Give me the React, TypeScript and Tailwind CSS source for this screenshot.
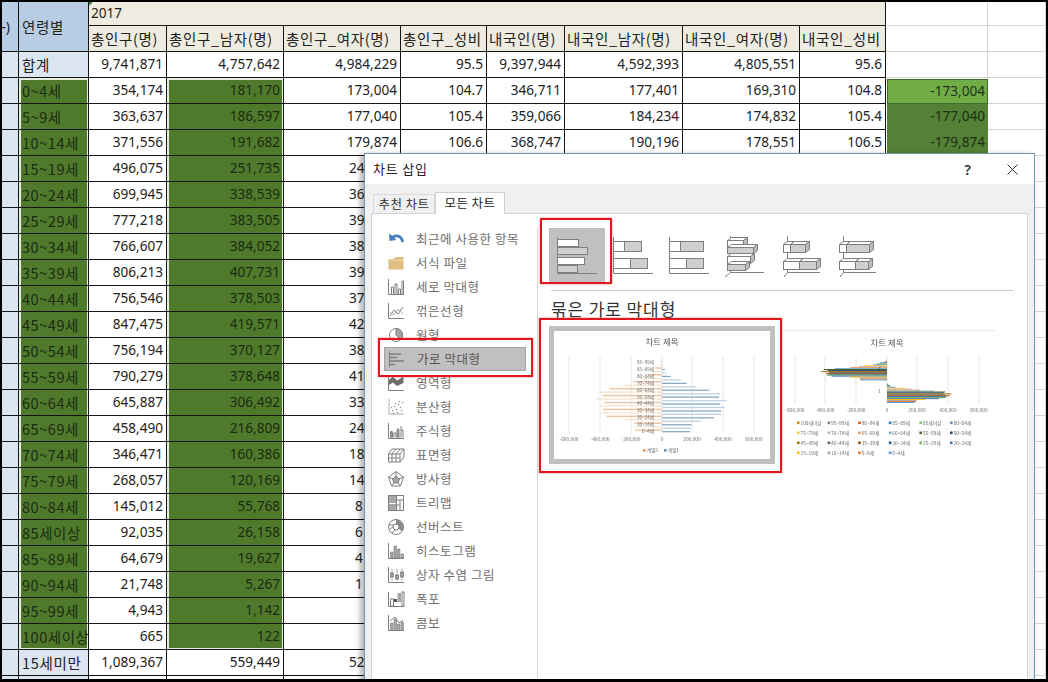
import React from "react";

const NUM = { fontFamily: '"Noto Sans","Noto Sans CJK KR",sans-serif' };
const KR = { fontFamily: '"Noto Sans CJK KR","Noto Sans",sans-serif' };

const ages: [string, number, number][] = [
  ["0~4세", 354174, 181170], ["5~9세", 363637, 186597], ["10~14세", 371556, 191682], ["15~19세", 496075, 251735],
  ["20~24세", 699945, 338539], ["25~29세", 777218, 383505], ["30~34세", 766607, 384052], ["35~39세", 806213, 407731],
  ["40~44세", 756546, 378503], ["45~49세", 847475, 419571], ["50~54세", 756194, 370127], ["55~59세", 790279, 378648],
  ["60~64세", 645887, 306492], ["65~69세", 458490, 216809], ["70~74세", 346471, 160386], ["75~79세", 268057, 120169],
  ["80~84세", 145012, 55768], ["85세이상", 92035, 26158], ["85~89세", 64679, 19627], ["90~94세", 21748, 5267],
  ["95~99세", 4943, 1142], ["100세이상", 665, 122],
];
const fmt = (n: number) => n.toLocaleString("en-US");

const heads = ["총인구(명)", "총인구_남자(명)", "총인구_여자(명)", "총인구_성비", "내국인(명)", "내국인_남자(명)", "내국인_여자(명)", "내국인_성비"];
const extra: string[][] = [
  ["104.7", "346,711", "177,401", "169,310", "104.8"],
  ["105.4", "359,066", "184,234", "174,832", "105.4"],
  ["106.6", "368,747", "190,196", "178,551", "106.5"],
];

const line = "border-r border-b border-[#141414]";
const grid = "border-r border-b border-[#d4d4d4]";
const numCls = `${line} flex items-center justify-end pr-[3px] text-[13.6px] text-[#222] whitespace-nowrap overflow-hidden`;
const cutCls = `${line} flex items-center text-[13.6px] text-[#222] whitespace-nowrap overflow-hidden`;

function CutCell({ value }: { value: number }) {
  if (value >= 100000) return <div className={`${cutCls} pl-[65px]`}>{String(value).slice(0, 2)}</div>;
  if (value >= 10000) return <div className={`${cutCls} pl-[71px]`}>{String(value).slice(0, 1)}</div>;
  return <div className={cutCls} />;
}

function Sheet() {
  return (
    <div className="grid grid-cols-[17px_70px_78px_117px_117px_86px_78px_118px_117px_86px_102px_1fr] grid-rows-[24px_26px] auto-rows-[26px]" style={NUM}>
      <div className={`${line} row-span-2 bg-[#b8cce4] flex items-center justify-end pr-[8px] text-[14px] text-[#222] overflow-hidden`}>-)</div>
      <div className={`${line} row-span-2 bg-[#b8cce4] flex items-center pl-[3px] text-[14.5px] tracking-[0.7px] text-[#222]`} style={KR}>연령별</div>
      <div className={`${line} col-span-8 bg-[#eeece1] flex items-center pl-[2px] text-[13.6px] text-[#222] relative`}>
        2017
        <span className="absolute left-0 top-0 w-0 h-0 border-t-[4px] border-r-[4px] border-t-[#2f8a3a] border-r-transparent" />
      </div>
      <div className={grid} />
      <div className={grid} />
      {heads.map((h) => (
        <div key={h} className={`${line} bg-[#eeece1] flex items-center pl-[2px] text-[14.5px] tracking-[0.65px] text-[#222] whitespace-nowrap overflow-hidden`} style={KR}>{h}</div>
      ))}
      <div className={grid} />
      <div className={grid} />

      <div className={`${line} bg-[#dce6f1]`} />
      <div className={`${line} bg-[#dce6f1] flex items-center pl-[3px] text-[14.5px] tracking-[0.7px] text-[#222]`} style={KR}>합계</div>
      {["9,741,871", "4,757,642", "4,984,229", "95.5", "9,397,944", "4,592,393", "4,805,551", "95.6"].map((v, i) => (
        <div key={i} className={numCls}>{v}</div>
      ))}
      <div className={grid} />
      <div className={grid} />

      {ages.map(([name, total, male], i) => {
        const first = i === 0;
        const last = i === ages.length - 1;
        const edge = first
          ? "shadow-[inset_2px_2px_0_#e6ede1,inset_-1px_0_0_#e6ede1]"
          : last
          ? "shadow-[inset_2px_-1px_0_#e6ede1,inset_-1px_-1px_0_#e6ede1]"
          : "shadow-[inset_2px_0_0_#e6ede1,inset_-1px_0_0_#e6ede1]";
        const ex = extra[i];
        return (
          <React.Fragment key={name}>
            <div className={`${line} bg-[#dce6f1]`} />
            <div className={`${line} ${edge} bg-[#4f7a2c] flex items-center pl-[3px] text-[14.5px] tracking-[0.55px] text-[#1c2a12] whitespace-nowrap overflow-hidden`} style={KR}>{name}</div>
            <div className={numCls}>{fmt(total)}</div>
            <div className={`${numCls} ${edge} bg-[#4f7a2c] !text-[#1c2a12]`}>{fmt(male)}</div>
            {i < 3 ? <div className={numCls}>{fmt(total - male)}</div> : <CutCell value={total - male} />}
            {[0, 1, 2, 3, 4].map((k) => (
              <div key={k} className={numCls}>{ex ? ex[k] : ""}</div>
            ))}
            {first ? (
              <div className="bg-[#70ad47] border border-[#3c6b2a] flex items-center justify-end pr-[2px] text-[13.6px] text-[#243318] ml-[1px] mt-px">-{fmt(total - male)}</div>
            ) : (
              <div className="bg-[#538135] flex items-center justify-end pr-[3px] pb-[2px] text-[13.6px] text-[#1f2d14] ml-[1px]">{i < 3 ? `-${fmt(total - male)}` : ""}</div>
            )}
            <div className={grid} />
          </React.Fragment>
        );
      })}

      <div className={`${line} bg-[#dce6f1]`} />
      <div className={`${line} bg-[#dce6f1] flex items-center pl-[3px] text-[14.5px] tracking-[0.7px] text-[#222]`} style={KR}>15세미만</div>
      <div className={numCls}>1,089,367</div>
      <div className={numCls}>559,449</div>
      <CutCell value={529918} />
      {[0, 1, 2, 3, 4].map((k) => <div key={k} className={numCls} />)}
      <div className={grid} />
      <div className={grid} />

      <div className={`${line} bg-[#dce6f1]`} />
      <div className={`${line} bg-[#dce6f1]`} />
      {[0, 1, 2, 3, 4, 5, 6, 7].map((k) => <div key={k} className={line} />)}
      <div className={grid} />
      <div className={grid} />
    </div>
  );
}

const G = "#7f7f7f";
const F = "#a6a6a6";
const listIcons: React.ReactNode[] = [
  <path d="M2 3.5 L2.5 11 L9.5 10 L7.2 7.8 C10 6.4 13.5 7.6 14.6 12.5 L17 12 C16.4 5.4 10.6 2.4 5.2 5.8 Z" fill="#4a7ebb" />,
  <g><path d="M1.5 5 H7 L8.5 3 H16.5 V15.5 H1.5 Z" fill="#e0bd80" /><path d="M1.5 5.5 H16.5 V7 H1.5 Z" fill="#e9cf9f" /></g>,
  <g fill="none" stroke={G}><path d="M1.5 1 V16.5 H17" /><path d="M4.5 16 V9 H6.5 V16 M8 16 V6 H10 V16 M11.5 16 V11 H13.5 V16 M15 16 V3 H16.5 V16" /></g>,
  <g fill="none" stroke={G}><path d="M1.5 1 V16.5 H17" /><path d="M3 14 L7 8 L11 12 L16 5" /><path d="M3 10 L7 13 L11 7 L16 12" stroke="#b0b0b0" /></g>,
  <g><circle cx="9" cy="9" r="6.5" fill="#fff" stroke={G} /><path d="M9 9 V2.5 A6.5 6.5 0 0 1 13.6 13.6 Z" fill={F} stroke={G} /></g>,
  <g fill="none" stroke={G}><path d="M1.5 1 V17" /><path d="M1.5 4 H13 M1.5 7.5 H9 M1.5 11 H16 M1.5 14.5 H7" strokeWidth="1.6" /></g>,
  <g><path d="M1.5 1 V16.5 H17" fill="none" stroke={G} /><path d="M2 6 L6 2.5 L10 6.5 L16.5 2.5 V9 L10 12 L6 8.5 L2 11 Z" fill="#6e6e6e" /></g>,
  <g fill={F}><path d="M1.5 1 V16.5 H17 V15.5 H2.5 V1 Z" fill="#b0b0b0" />{[[5,12],[7,8],[9,11],[11,6],[13,9],[15,4],[6,15],[10,14],[14,12],[8,5],[12,3],[4,9]].map(([x,y],i)=><rect key={i} x={x} y={y} width="1.2" height="1.2" fill="#8a8a8a"/>)}</g>,
  <g fill="none" stroke={G}><path d="M1.5 1 V16.5 H17" /><path d="M4.5 15.5 V9 M7 15.5 V11 H9 V15.5 M11 15.5 V6 M14 15.5 V8 H16 V15.5 M14 4 V8" /><rect x="3.5" y="10" width="2" height="5" fill={F} /><rect x="10" y="8" width="2" height="7" fill={F} /></g>,
  <g fill="none" stroke={G}><path d="M5 3 H17 V11 L13 16 H1.5 V8 Z" /><path d="M1.5 8 H13 V16 M13 8 L17 3 M5 8 V16 M9 8 V16 M1.5 12 H13" /><path d="M5 8 L9 3 M9 8 L13 3" /></g>,
  <g fill="none" stroke={G}><path d="M9 1.5 L16.5 7 L13.5 16 H4.5 L1.5 7 Z" /><path d="M9 1.5 V10 M16.5 7 L9 10 M13.5 16 L9 10 M4.5 16 L9 10 M1.5 7 L9 10" /><path d="M9 6 L12.5 9 L11 13 H7 L5.5 9 Z" fill={F} /></g>,
  <g><rect x="1.5" y="1.5" width="15" height="15" fill="#fff" stroke={G} /><rect x="2" y="2" width="7" height="7" fill={F} /><rect x="2" y="10" width="7" height="6" fill={F} /><path d="M9.5 1.5 V16.5 M9.5 6 H16.5 M13 6 V16.5 M9.5 11 H13" stroke={G} fill="none" /></g>,
  <g><circle cx="9" cy="9" r="7.5" fill="#fff" stroke={G} /><path d="M9 1.5 A7.5 7.5 0 0 1 15 13.5 L11 10 A3 3 0 0 0 9 6 Z" fill="#8c8c8c" /><path d="M3 11 L6 9 M5 15 L8 12 M2 7 H6" stroke={G} fill="none" /><circle cx="9" cy="9" r="3" fill="#fff" stroke={G} /></g>,
  <g><path d="M1.5 1 V16.5 H17" fill="none" stroke={G} /><path d="M3.5 16 V10 H6 V16 Z M7 16 V4 H9.5 V16 Z M10.5 16 V7 H13 V16 Z M14 16 V12 H16.5 V16 Z" fill={F} stroke={G} strokeWidth="0.6" /></g>,
  <g fill="none" stroke={G}><path d="M1.5 1 V16.5 H17" /><path d="M5 3 V15 M10 3 V15 M15 3 V15" strokeDasharray="1.5 1" /><rect x="3.7" y="7" width="2.6" height="4" fill={F} /><rect x="8.7" y="9" width="2.6" height="4" fill={F} /><rect x="13.7" y="6" width="2.6" height="5" fill={F} /></g>,
  <g><path d="M1.5 2 V16.5 H17" fill="none" stroke={G} /><rect x="15" y="2" width="2" height="14" fill="none" stroke={G} /><rect x="3.5" y="9" width="3" height="7" fill="#fff" stroke={G} /><rect x="7" y="9" width="3" height="3" fill="#555" /><rect x="10.5" y="3" width="3.5" height="9" fill={F} /></g>,
  <g><path d="M1.5 1 V16.5 H17" fill="none" stroke={G} /><path d="M3.5 16 V9 H6 V16 M7 16 V5 H9.5 V16 M10.5 16 V10 H13 V16 M14 16 V8 H16.5 V16" fill={F} stroke={G} strokeWidth="0.6" /><path d="M3 7 L8 3 L12 9 L16 6" fill="none" stroke="#666" strokeWidth="0.8" /></g>,
];
const listLabels = ["최근에 사용한 항목", "서식 파일", "세로 막대형", "꺾은선형", "원형", "가로 막대형", "영역형", "분산형", "주식형", "표면형", "방사형", "트리맵", "선버스트", "히스토그램", "상자 수염 그림", "폭포", "콤보"];

function TypeIcon({ kind }: { kind: number }) {
  const s = "#7f7f7f";
  const w = "#fff";
  const g = "#cfcfcf";
  const bar = (x: number, y: number, wd: number, h: number, fill: string, key: string) => (
    <rect key={key} x={x + 0.5} y={y + 0.5} width={wd} height={h} fill={fill} stroke={s} />
  );
  const box3d = (x: number, y: number, wd: number, h: number, fill: string, key: string) => (
    <g key={key}>
      <path d={`M${x + 0.5} ${y + 0.5} l4 -3 h${wd} l-4 3 z`} fill="#fff" stroke={s} />
      <path d={`M${x + wd + 0.5} ${y + 0.5} l4 -3 v${h} l-4 3 z`} fill="#bdbdbd" stroke={s} />
      <rect x={x + 0.5} y={y + 0.5} width={wd} height={h} fill={fill} stroke={s} />
    </g>
  );
  let body: React.ReactNode = null;
  if (kind === 0)
    body = (
      <>
        {bar(8, 11, 21, 7, w, "a")}{bar(8, 19, 30, 7, g, "b")}{bar(8, 29, 27, 7, w, "c")}{bar(8, 37, 20, 7, g, "d")}
        <path d="M8.5 9 V45.5 H48" fill="none" stroke={s} />
      </>
    );
  if (kind === 1)
    body = (
      <>
        {bar(8, 13, 11, 10, w, "a")}{bar(19, 13, 17, 10, g, "b")}{bar(8, 30, 17, 10, w, "c")}{bar(25, 30, 17, 10, g, "d")}
        <path d="M8.5 9 V45.5 H48" fill="none" stroke={s} />
      </>
    );
  if (kind === 2)
    body = (
      <>
        {bar(8, 13, 11, 10, w, "a")}{bar(19, 13, 23, 10, g, "b")}{bar(8, 30, 17, 10, w, "c")}{bar(25, 30, 17, 10, g, "d")}
        <path d="M8.5 9 V45.5 H48" fill="none" stroke={s} />
      </>
    );
  if (kind === 3)
    body = (
      <>
        <path d="M13.5 8 V44.5 L8 49 M13.5 44.5 H47" fill="none" stroke={s} />
        {box3d(10, 12, 16, 6, w, "a")}{box3d(10, 19, 26, 6, g, "b")}{box3d(10, 28, 23, 7, w, "c")}{box3d(10, 36, 18, 6, g, "d")}
      </>
    );
  if (kind >= 4) {
    const b = kind === 4 ? 15 : 23;
    const c = kind === 4 ? 17 : 13;
    body = (
      <>
        <path d="M14.5 8 V44.5 L11 49 M14.5 44.5 H47" fill="none" stroke={s} />
        {box3d(10, 16, 7, 8, w, "a")}{box3d(17, 16, b, 8, g, "b")}
        {box3d(10, 33, 16, 8, w, "c")}{box3d(26, 33, c, 8, g, "d")}
      </>
    );
  }
  return (
    <div className={`w-[56px] h-[56px] ${kind === 0 ? "bg-[#c0c0c0]" : ""}`}>
      <svg width="56" height="56" viewBox="0 0 56 56">{body}</svg>
    </div>
  );
}

const TXT = '"Noto Sans CJK KR","Noto Sans",sans-serif';

function Pyramid() {
  const c = 662;
  const k = 30.8 / 200000;
  const grids = [569, 600, 631, 662, 692, 723, 754];
  const lab = ["-600,000", "-400,000", "-200,000", "0", "200,000", "400,000", "600,000"];
  return (
    <svg className="block blur-[0.45px]" width="216" height="128" viewBox="554 331 216 128" fontFamily={TXT}>
      <text x={c} y={345} fontSize="8.5" textAnchor="middle" fill="#595959">차트 제목</text>
      {grids.map((x) => <line key={x} x1={x} x2={x} y1={356} y2={433} stroke="#e6e6e6" />)}
      {ages.map(([n, t, m], i) => {
        const y = 431 - i * 3.45;
        return (
          <g key={n}>
            <rect x={c - (t - m) * k} y={y - 1.6} width={(t - m) * k} height={1.4} fill={i % 2 ? "#f9e4d2" : "#edc3a0"} />
            <rect x={c} y={y} width={m * k} height={1.3} fill={i % 2 ? "#bcd3e5" : "#85abc9"} />
            {i % 2 === 0 && (
              <text x={654} y={y + 2} fontSize="4.6" textAnchor="end" fill="#6b6b6b">{n}</text>
            )}
          </g>
        );
      })}
      {lab.map((l, i) => <text key={l} x={grids[i]} y={441} fontSize="4.8" textAnchor="middle" fill="#6b6b6b">{l}</text>)}
      <rect x={643} y={449} width="2.6" height="2.6" fill="#e3955a" />
      <text x={646.5} y={452} fontSize="4.8" fill="#6b6b6b">계열2</text>
      <rect x={664} y={449} width="2.6" height="2.6" fill="#5b8fb9" />
      <text x={667.5} y={452} fontSize="4.8" fill="#6b6b6b">계열1</text>
    </svg>
  );
}

const colors = ["#5b9bd5", "#ed7d31", "#a5a5a5", "#ffc000", "#4472c4", "#70ad47", "#255e91", "#9e480e", "#636363", "#997300", "#264478", "#43682b", "#7cafdd", "#f1975a", "#b7b7b7", "#ffcd33", "#698ed0", "#8cc168", "#327dc2", "#d26012", "#848484", "#cc9a00"];

function Cluster() {
  const c = 887;
  const k = 30.7 / 200000;
  const grids = [795, 825, 856, 887, 917, 948, 979];
  const lab = ["-600,000", "-400,000", "-200,000", "0", "200,000", "400,000", "600,000"];
  const order: string[] = ["100세이상", "95~99세", "90~94세", "85~89세", "85세이상", "80~84세", "75~79세", "70~74세", "65~69세", "60~64세", "55~59세", "50~54세", "45~49세", "40~44세", "35~39세", "30~34세", "25~29세", "20~24세", "15~19세", "10~14세", "5~9세", "0~4세"];
  const rev = [...ages].reverse();
  return (
    <svg className="block blur-[0.45px]" width="212" height="130" viewBox="783 330 212 130" fontFamily={TXT}>
      <text x={c} y={345} fontSize="8.5" textAnchor="middle" fill="#595959">차트 제목</text>
      {grids.map((x) => <line key={x} x1={x} x2={x} y1={356} y2={403} stroke="#e6e6e6" />)}
      {rev.map(([n, t, m], i) => {
        const col = colors[(21 - i) % colors.length];
        return (
          <g key={n}>
            <rect x={c - (t - m) * k} y={358.5 + i * 0.95} width={(t - m) * k} height={1} fill={col} />
            <rect x={c} y={381 + i * 0.95} width={m * k} height={1} fill={col} />
          </g>
        );
      })}
      <text x={881} y={368} fontSize="4.8" textAnchor="end" fill="#6b6b6b">2</text>
      <text x={881} y={392} fontSize="4.8" textAnchor="end" fill="#6b6b6b">1</text>
      {lab.map((l, i) => <text key={l} x={grids[i]} y={411} fontSize="4.8" textAnchor="middle" fill="#6b6b6b">{l}</text>)}
      {order.map((n, i) => {
        const x = 797 + (i % 6) * 30.6;
        const y = 422 + Math.floor(i / 6) * 10;
        return (
          <g key={n}>
            <rect x={x} y={y - 1.5} width="2.6" height="2.6" fill={colors[(21 - i) % colors.length]} />
            <text x={x + 3.5} y={y + 1.5} fontSize="4.8" fill="#6b6b6b">{n}</text>
          </g>
        );
      })}
    </svg>
  );
}

function Dialog() {
  return (
    <div className="absolute left-[362px] top-[151px] w-[671px] h-[540px] bg-[#f0f0f0] border border-[#6f97ad] shadow-[-4px_1px_5px_rgba(0,0,0,0.28)] flex flex-col" style={KR}>
      <div className="h-[30px] shrink-0 bg-white flex items-center justify-between pl-[8px] pr-[16px]">
        <span className="text-[13px] tracking-[0.8px] text-[#222]">차트 삽입</span>
        <div className="flex items-center gap-[36px]">
          <span className="text-[14px] font-semibold text-[#333]" style={NUM}>?</span>
          <svg width="11" height="11" viewBox="0 0 11 11"><path d="M0.5 0.5 L10.5 10.5 M10.5 0.5 L0.5 10.5" stroke="#333" strokeWidth="1" /></svg>
        </div>
      </div>
      <div className="h-[30px] shrink-0 flex items-end pl-[8px] relative z-10">
        <div className="h-[19px] w-[62px] mb-px border border-b-0 border-[#d9d9d9] bg-[#f0f0f0] flex items-center justify-center text-[12.5px] tracking-[0.4px] text-[#333] whitespace-nowrap">추천 차트</div>
        <div className="h-[22px] w-[70px] border border-b-0 border-[#d0d0d0] bg-white flex items-center justify-center text-[12.5px] tracking-[0.4px] text-[#222] whitespace-nowrap">모든 차트</div>
      </div>
      <div className="flex-1 mx-[6px] bg-white border border-[#d4d4d4] -mt-px flex min-h-0">
        <div className="w-[165px] shrink-0 pt-[13px] pl-[12px] pr-[11px] flex flex-col">
          {listLabels.map((l, i) => (
            <div key={l} className={`h-[24px] shrink-0 flex items-center pl-[3px] gap-[11px] text-[12.5px] tracking-[0.55px] whitespace-nowrap ${i === 5 ? "bg-[#c0c0c0] border border-[#a3a3a3] text-[#555]" : "text-[#6e6e6e]"}`}>
              <svg width="18" height="18" viewBox="0 0 18 18" className="shrink-0">{listIcons[i]}</svg>
              {l}
            </div>
          ))}
        </div>
        <div className="mt-[14px] flex-1 border-l border-[#d9d9d9] pl-[11px] pr-[13px] min-w-0">
          <div className="flex">
            {[0, 1, 2, 3, 4, 5].map((k) => <TypeIcon key={k} kind={k} />)}
          </div>
          <div className="mt-[6px] ml-[2px] border-t border-[#cfcfcf]" />
          <div className="mt-[6px] ml-[2px] h-[24px] text-[17px] leading-[24px] tracking-[0.9px] text-[#333]">묶은 가로 막대형</div>
          <div className="mt-[5px] flex gap-[8px] items-start">
            <div className="border-[5px] border-[#c0c0c0] shrink-0"><Pyramid /></div>
            <div className="mt-[4px] border-t border-[#e8e8e8] shrink-0"><Cluster /></div>
          </div>
        </div>
      </div>
      <div className="absolute left-[175px] top-[64px] w-[72px] h-[66px] border-2 border-[#e3141c] shadow-[0_0_2px_rgba(227,20,28,0.5)]" />
      <div className="absolute left-[13px] top-[184px] w-[155px] h-[39px] border-2 border-[#e3141c] shadow-[0_0_2px_rgba(227,20,28,0.5)]" />
      <div className="absolute left-[174px] top-[164px] w-[243px] h-[155px] border-2 border-[#e3141c] shadow-[0_0_2px_rgba(227,20,28,0.5)]" />
    </div>
  );
}

export default function App() {
  return (
    <div className="relative w-[1048px] h-[682px] overflow-hidden bg-white border-2 border-b-[3px] border-black">
      <Sheet />
      <Dialog />
    </div>
  );
}
